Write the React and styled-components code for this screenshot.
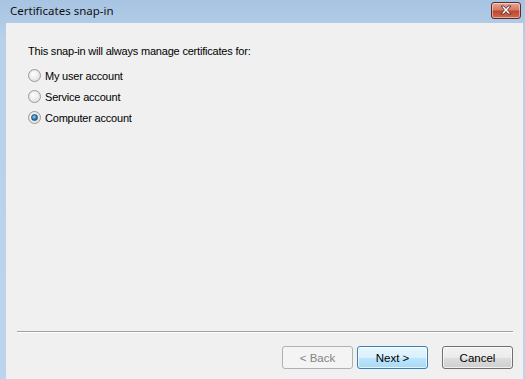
import React, { useState } from "react";
import styled, { createGlobalStyle } from "styled-components";

const GlobalStyle = createGlobalStyle`
  html, body {
    margin: 0;
    padding: 0;
    width: 525px;
    height: 379px;
    overflow: hidden;
  }
`;

const Window = styled.div`
  width: 525px;
  height: 379px;
  display: flex;
  flex-direction: column;
  background: linear-gradient(180deg, #a7c4e2 0%, #b8d0ea 40px, #bcd4ec 100%);
  font-family: "Liberation Sans", Arial, sans-serif;
  font-size: 11px;
  color: #000;
`;

const TitleBar = styled.div`
  height: 23px;
  display: flex;
  align-items: center;
  justify-content: space-between;
  padding: 0 4px 0 10px;
  box-sizing: border-box;
`;

const Title = styled.div`
  font-family: "Noto Sans", "DejaVu Sans", sans-serif;
  font-size: 11.5px;
  margin-top: -2px;
  color: #111;
`;

const CloseBtn = styled.div`
  width: 30px;
  height: 17px;
  margin-top: -3px;
  box-sizing: border-box;
  border: 1px solid #5c2a2a;
  border-radius: 3px;
  background: linear-gradient(180deg, #e8a795 0%, #d57a66 45%, #c0462e 55%, #cf6a4f 100%);
  box-shadow: inset 0 0 0 1px rgba(255, 255, 255, 0.45);
  display: flex;
  align-items: center;
  justify-content: center;
`;

const Body = styled.div`
  flex: 1;
  margin: 0 2px 0 6px;
  background: #f0f0f0;
  display: flex;
  flex-direction: column;
`;

const Content = styled.div`
  flex: 1;
  padding: 21px 22px 0 22px;
  display: flex;
  flex-direction: column;
  letter-spacing: -0.2px;
`;

const Prompt = styled.div`
  line-height: 15px;
  margin-bottom: 6px;
`;

const Option = styled.label`
  display: flex;
  align-items: center;
  gap: 4px;
  height: 21px;
  cursor: default;
`;

const Radio = styled.span`
  width: 13px;
  height: 13px;
  box-sizing: border-box;
  border-radius: 50%;
  border: 1px solid #9a9a9a;
  background: radial-gradient(circle at 40% 35%, #ffffff 0%, #efefef 45%, #d4d4d4 100%);
  box-shadow: inset 0 0 0 1px #e6e6e6;
  display: flex;
  align-items: center;
  justify-content: center;
  flex-shrink: 0;

  &::after {
    content: "";
    display: ${(p) => (p.$checked ? "block" : "none")};
    width: 5px;
    height: 5px;
    border-radius: 50%;
    border: 1px solid #1b4a6e;
    background: radial-gradient(circle at 40% 35%, #8fd0f5 0%, #2a7fbd 55%, #0f4f80 100%);
  }
`;

const Footer = styled.div`
  margin: 0 10px 0 11px;
  border-top: 1px solid #a0a0a0;
  box-shadow: inset 0 1px 0 #ffffff;
  display: flex;
  justify-content: flex-end;
  padding: 14px 0 10px 0;
  gap: 4px;
`;

const Button = styled.div`
  width: 71px;
  height: 23px;
  box-sizing: border-box;
  border-radius: 3px;
  display: flex;
  align-items: center;
  justify-content: center;
  font-size: 11.5px;
  margin-left: ${(p) => (p.$spaced ? "10px" : "0")};
  border: 1px solid
    ${(p) => (p.$variant === "disabled" ? "#adb2b5" : p.$variant === "default" ? "#3c7fb1" : "#707070")};
  color: ${(p) => (p.$variant === "disabled" ? "#838383" : "#000")};
  background: ${(p) =>
    p.$variant === "disabled"
      ? "#f4f4f4"
      : p.$variant === "default"
      ? "linear-gradient(180deg, #eaf6fd 0%, #d9f0fc 50%, #bee6fd 51%, #a7d9f5 100%)"
      : "linear-gradient(180deg, #f2f2f2 0%, #ebebeb 50%, #dddddd 51%, #cfcfcf 100%)"};
  box-shadow: inset 0 0 0 1px
    ${(p) => (p.$variant === "disabled" ? "#f4f4f4" : "rgba(255,255,255,0.7)")};
`;

const options = ["My user account", "Service account", "Computer account"];

export default function App() {
  const [selected, setSelected] = useState(2);

  return (
    <Window>
      <GlobalStyle />
      <TitleBar>
        <Title>Certificates snap-in</Title>
        <CloseBtn>
          <svg width="14" height="10" viewBox="0 0 14 10">
            <path
              d="M2 1 L5 1 L7 3.5 L9 1 L12 1 L8.6 5 L12 9 L9 9 L7 6.5 L5 9 L2 9 L5.4 5 Z"
              fill="#ffffff"
              stroke="#5a2e2a"
              strokeWidth="0.9"
              strokeLinejoin="round"
            />
          </svg>
        </CloseBtn>
      </TitleBar>
      <Body>
        <Content>
          <Prompt>This snap-in will always manage certificates for:</Prompt>
          {options.map((label, i) => (
            <Option key={label} onClick={() => setSelected(i)}>
              <Radio $checked={selected === i} />
              {label}
            </Option>
          ))}
        </Content>
        <Footer>
          <Button $variant="disabled">&lt; Back</Button>
          <Button $variant="default">Next &gt;</Button>
          <Button $spaced>Cancel</Button>
        </Footer>
      </Body>
    </Window>
  );
}
